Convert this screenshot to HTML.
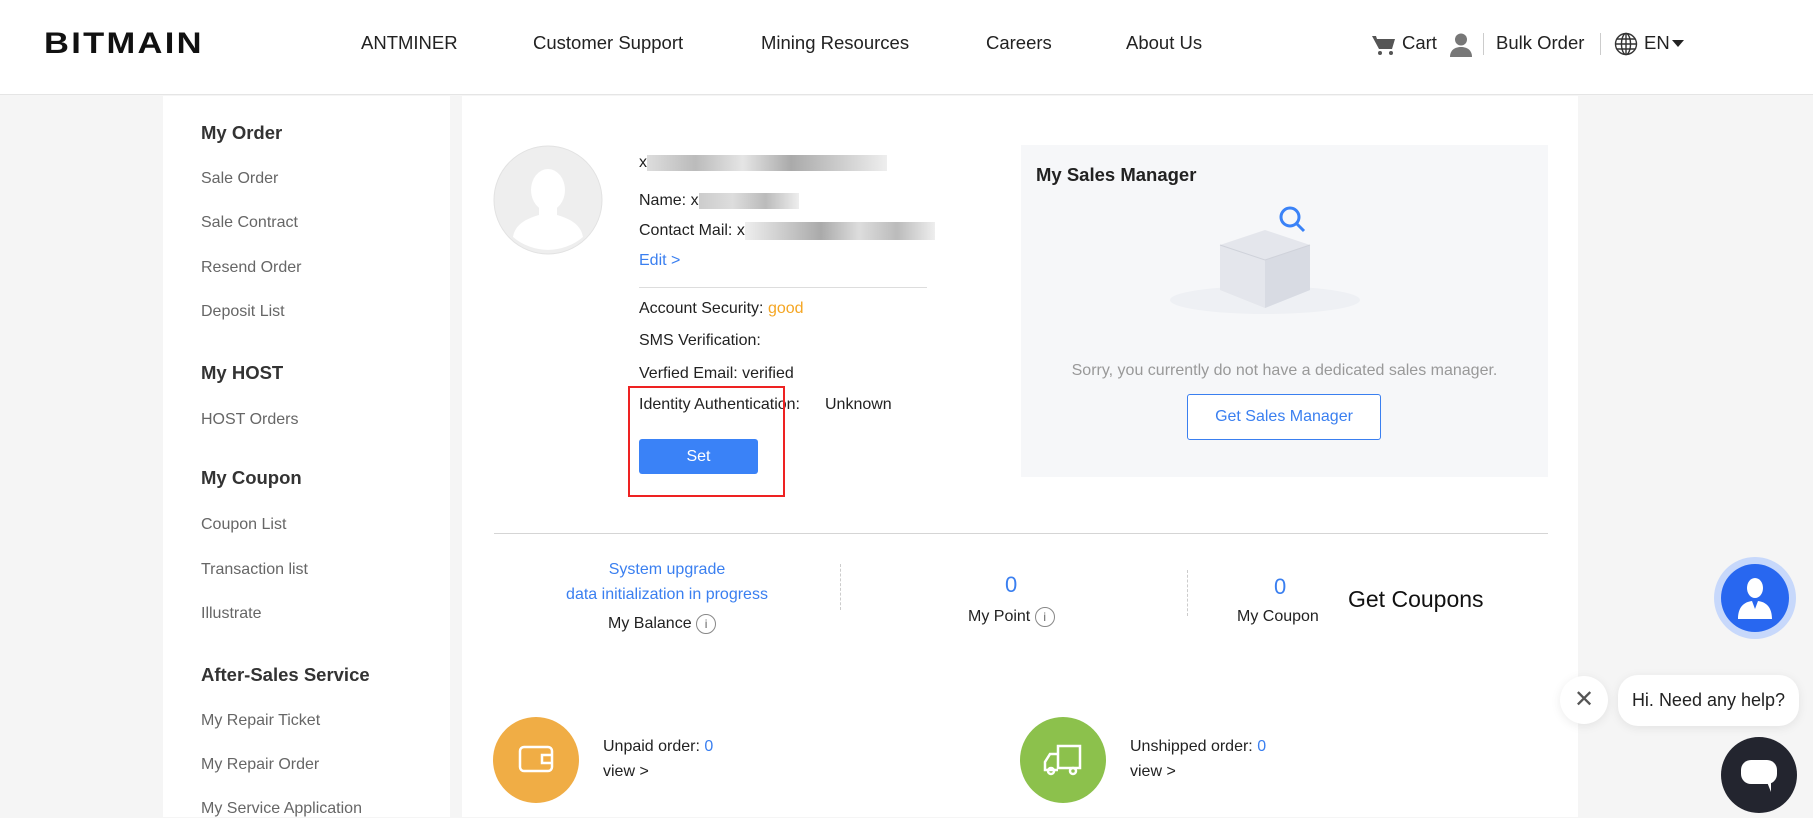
<!DOCTYPE html>
<html><head><meta charset="utf-8"><style>
*{margin:0;padding:0;box-sizing:border-box}
body{width:1813px;height:817px;overflow:hidden;background:#f5f5f5;font-family:"Liberation Sans",Arial,sans-serif;color:#222;position:relative}
.a{position:absolute;white-space:nowrap}
#hd{position:absolute;left:0;top:0;width:1813px;height:95px;background:#fff;border-bottom:1px solid #e5e5e5}
.nav{font-size:18.5px;color:#222;top:32px}
.sb{font-size:16px;color:#666;left:201px}
.sbh{font-size:18.5px;font-weight:bold;color:#333;left:201px}
.t{font-size:16px;color:#222;left:639px}
.blue{color:#3a7ff0}
</style></head><body>
<div id="hd">
 <div class="a" style="left:44px;top:27px;font-size:30px;letter-spacing:2px;color:#111;font-weight:bold;transform:scaleX(1.15);transform-origin:left">BITMAIN</div>
 <div class="a nav" style="left:361px">ANTMINER</div>
 <div class="a nav" style="left:533px">Customer Support</div>
 <div class="a nav" style="left:761px">Mining Resources</div>
 <div class="a nav" style="left:986px">Careers</div>
 <div class="a nav" style="left:1126px">About Us</div>
 <svg class="a" style="left:1372px;top:34px" width="24" height="22" viewBox="0 0 24 22"><path d="M0 2h4l1 3h18l-3 10H7z" fill="#555"/><circle cx="8" cy="19" r="2" fill="#555"/><circle cx="19" cy="19" r="2" fill="#555"/></svg>
 <div class="a nav" style="left:1402px">Cart</div>
 <svg class="a" style="left:1450px;top:33px" width="22" height="24" viewBox="0 0 22 24"><circle cx="11" cy="6.5" r="6" fill="#777"/><path d="M0 24c0-7 5-10 11-10s11 3 11 10z" fill="#777"/></svg>
 <div class="a" style="left:1483px;top:33px;width:1px;height:22px;background:#ccc"></div>
 <div class="a nav" style="left:1496px">Bulk Order</div>
 <div class="a" style="left:1600px;top:33px;width:1px;height:22px;background:#ccc"></div>
 <svg class="a" style="left:1614px;top:32px" width="24" height="24" viewBox="0 0 24 24" fill="none" stroke="#333" stroke-width="1.4"><circle cx="12" cy="12" r="10.5"/><ellipse cx="12" cy="12" rx="4.5" ry="10.5"/><path d="M1.5 12h21M3 7h18M3 17h18M12 1.5v21"/></svg>
 <div class="a nav" style="left:1644px">EN</div>
 <svg class="a" style="left:1672px;top:40px" width="12" height="8"><path d="M0 0h12L6 7z" fill="#222"/></svg>
</div>

<div class="a" style="left:163px;top:96px;width:287px;height:721px;background:#fff"></div>
<div class="a" style="left:462px;top:96px;width:1116px;height:721px;background:#fff"></div>

<div class="a sbh" style="top:122px">My Order</div>
<div class="a sb" style="top:170px">Sale Order</div>
<div class="a sb" style="top:214px">Sale Contract</div>
<div class="a sb" style="top:259px">Resend Order</div>
<div class="a sb" style="top:303px">Deposit List</div>
<div class="a sbh" style="top:362px">My HOST</div>
<div class="a sb" style="top:411px">HOST Orders</div>
<div class="a sbh" style="top:467px">My Coupon</div>
<div class="a sb" style="top:516px">Coupon List</div>
<div class="a sb" style="top:561px">Transaction list</div>
<div class="a sb" style="top:605px">Illustrate</div>
<div class="a sbh" style="top:664px">After-Sales Service</div>
<div class="a sb" style="top:712px">My Repair Ticket</div>
<div class="a sb" style="top:756px">My Repair Order</div>
<div class="a sb" style="top:800px">My Service Application</div>

<svg class="a" style="left:493px;top:145px" width="110" height="110" viewBox="0 0 110 110"><circle cx="55" cy="55" r="54" fill="#eee" stroke="#e2e2e2"/><ellipse cx="55" cy="45" rx="17" ry="21" fill="#fff"/><path d="M46 62v8c-14 4-24 10-26 22a54 54 0 0 0 70 0c-2-12-12-18-26-22v-8z" fill="#fff"/></svg>

<div class="a t" style="top:154px">x<span style="display:inline-block;width:240px;height:16px;background:linear-gradient(90deg,#ddd,#bbb,#e5e5e5,#aaa,#ccc,#eee);vertical-align:middle"></span></div>
<div class="a t" style="top:192px">Name: x<span style="display:inline-block;width:100px;height:16px;background:linear-gradient(90deg,#ccc,#ddd,#bbb,#eee);vertical-align:middle"></span></div>
<div class="a t" style="top:222px">Contact Mail: x<span style="display:inline-block;width:190px;height:18px;background:linear-gradient(90deg,#eee,#ccc,#aaa,#ddd,#bbb,#eee);vertical-align:middle"></span></div>
<div class="a t blue" style="top:252px">Edit &gt;</div>
<div class="a" style="left:639px;top:287px;width:288px;height:1px;background:#ddd"></div>
<div class="a t" style="top:300px">Account Security: <span style="color:#f5a623">good</span></div>
<div class="a t" style="top:332px">SMS Verification:</div>
<div class="a t" style="top:365px">Verfied Email: verified</div>
<div class="a t" style="top:396px">Identity Authentication:</div>
<div class="a t" style="top:396px;left:825px">Unknown</div>
<div class="a" style="left:639px;top:439px;width:119px;height:35px;background:#3a82f7;border-radius:3px;color:#fff;font-size:16px;text-align:center;line-height:35px">Set</div>
<div class="a" style="left:628px;top:386px;width:157px;height:111px;border:2.5px solid #ee2222"></div>

<div class="a" style="left:1021px;top:145px;width:527px;height:332px;background:#f6f7f9"></div>
<div class="a" style="left:1036px;top:164px;font-size:18.5px;font-weight:bold;color:#222">My Sales Manager</div>
<svg class="a" style="left:1165px;top:205px" width="200" height="110" viewBox="0 0 200 110"><ellipse cx="100" cy="95" rx="95" ry="14" fill="#eef0f4"/><path d="M55 40l45-15 45 15v45l-45 18-45-18z" fill="#e4e6ec"/><path d="M100 55v48l45-18V40z" fill="#d8dbe3"/><path d="M55 40l45 15 45-15" fill="none" stroke="#cfd2da"/><circle cx="125" cy="12" r="9" fill="none" stroke="#3a82f7" stroke-width="3"/><path d="M131 18l8 8" stroke="#3a82f7" stroke-width="3"/></svg>
<div class="a" style="left:1021px;width:527px;text-align:center;top:362px;font-size:16px;color:#999">Sorry, you currently do not have a dedicated sales manager.</div>
<div class="a" style="left:1187px;top:394px;width:194px;height:46px;border:1px solid #3a7ff0;border-radius:3px;background:#fff;color:#3a7ff0;font-size:16px;text-align:center;line-height:44px">Get Sales Manager</div>

<div class="a" style="left:494px;top:533px;width:1054px;height:1px;background:#d5d5d5"></div>
<div class="a blue" style="left:517px;width:300px;text-align:center;top:561px;font-size:16px">System upgrade</div>
<div class="a blue" style="left:517px;width:300px;text-align:center;top:586px;font-size:16px">data initialization in progress</div>
<div class="a" style="left:608px;top:614px;font-size:16px">My Balance <span style="display:inline-block;width:20px;height:20px;border:1px solid #888;border-radius:50%;font-size:12px;text-align:center;line-height:18px;color:#666;vertical-align:middle">i</span></div>
<div class="a" style="left:840px;top:564px;height:46px;border-left:1px dashed #ccc"></div>
<div class="a blue" style="left:1005px;top:572px;font-size:22px">0</div>
<div class="a" style="left:968px;top:607px;font-size:16px">My Point <span style="display:inline-block;width:20px;height:20px;border:1px solid #888;border-radius:50%;font-size:12px;text-align:center;line-height:18px;color:#666;vertical-align:middle">i</span></div>
<div class="a" style="left:1187px;top:570px;height:46px;border-left:1px dashed #ccc"></div>
<div class="a blue" style="left:1274px;top:574px;font-size:22px">0</div>
<div class="a" style="left:1237px;top:608px;font-size:16px">My Coupon</div>
<div class="a" style="left:1348px;top:586px;font-size:23px;color:#111">Get Coupons</div>

<div class="a" style="left:493px;top:717px;width:86px;height:86px;border-radius:50%;background:#f0ad45"></div>
<svg class="a" style="left:518px;top:744px" width="36" height="30" viewBox="0 0 36 30" fill="none" stroke="#fff" stroke-width="2.5"><rect x="2" y="3" width="32" height="24" rx="4"/><path d="M34 11h-10v8h10"/></svg>
<div class="a" style="left:603px;top:738px;font-size:16px">Unpaid order: <span class="blue">0</span></div>
<div class="a" style="left:603px;top:763px;font-size:16px">view &gt;</div>
<div class="a" style="left:1020px;top:717px;width:86px;height:86px;border-radius:50%;background:#8cc14c"></div>
<svg class="a" style="left:1042px;top:742px" width="42" height="36" viewBox="0 0 42 36" fill="none" stroke="#fff" stroke-width="2.5"><path d="M16 4h22v22H16zM16 12H8l-5 8v8h13"/><circle cx="9" cy="29" r="3"/><circle cx="31" cy="29" r="3"/></svg>
<div class="a" style="left:1130px;top:738px;font-size:16px">Unshipped order: <span class="blue">0</span></div>
<div class="a" style="left:1130px;top:763px;font-size:16px">view &gt;</div>

<div class="a" style="left:1714px;top:557px;width:82px;height:82px;border-radius:50%;background:#c7d8fb"></div>
<div class="a" style="left:1721px;top:564px;width:68px;height:68px;border-radius:50%;background:#2867f0"></div>
<svg class="a" style="left:1738px;top:577px" width="34" height="42" viewBox="0 0 34 42"><ellipse cx="17" cy="11" rx="8" ry="10" fill="#fff"/><path d="M0 42c0-12 6-17 14-18l3 8 3-8c8 1 14 6 14 18z" fill="#fff"/></svg>
<div class="a" style="left:1560px;top:676px;width:48px;height:48px;border-radius:50%;background:#fff;box-shadow:0 2px 10px rgba(0,0,0,.08);text-align:center;line-height:48px;font-size:24px;color:#555">✕</div>
<div class="a" style="left:1618px;top:675px;width:181px;height:51px;border-radius:20px;background:#fff;box-shadow:0 2px 10px rgba(0,0,0,.08);font-size:18px;line-height:51px;text-align:center;color:#222">Hi. Need any help?</div>
<div class="a" style="left:1721px;top:737px;width:76px;height:76px;border-radius:50%;background:#23252f"></div>
<svg class="a" style="left:1741px;top:760px" width="36" height="34" viewBox="0 0 36 34"><rect x="0" y="0" width="36" height="24" rx="10" fill="#fff"/><path d="M26 22l4 10v-10z" fill="#fff"/></svg>
</body></html>
